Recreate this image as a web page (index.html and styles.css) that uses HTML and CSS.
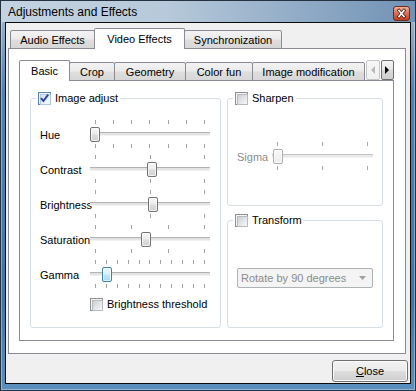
FILE: index.html
```html
<!DOCTYPE html>
<html>
<head>
<meta charset="utf-8">
<link rel="stylesheet" href="styles.css">
</head>
<body>
<div class="window">
  <div class="titlebar">
    <span class="title">Adjustments and Effects</span>
    <span class="tb-close">
      <svg width="17" height="15" viewBox="0 0 17 15">
        <defs>
          <linearGradient id="rg" x1="0" y1="0" x2="0" y2="1">
            <stop offset="0" stop-color="#f1b8a4"/>
            <stop offset="0.45" stop-color="#dc7358"/>
            <stop offset="1" stop-color="#c0391d"/>
          </linearGradient>
        </defs>
        <rect x="0.5" y="0.5" width="16" height="14" rx="2.5" fill="url(#rg)" stroke="#6e2c1f"/>
        <path d="M6 4.5 L11 10.5 M11 4.5 L6 10.5" stroke="#4a1a10" stroke-width="3.2" stroke-linecap="square"/>
        <path d="M6 4.5 L11 10.5 M11 4.5 L6 10.5" stroke="#ffffff" stroke-width="1.6" stroke-linecap="square"/>
      </svg>
    </span>
  </div>
  <div class="client">
    <div class="tabwidget outer">
      <div class="tabbar">
        <div class="tab w-audio">Audio Effects</div>
        <div class="tab sel w-video">Video Effects</div>
        <div class="tab w-sync">Synchronization</div>
      </div>
      <div class="pane outer-pane">
        <div class="tabwidget inner">
          <div class="tabbar inner-bar">
            <div class="tabs-clip">
              <div class="tab sel w-basic">Basic</div>
              <div class="tab w-crop">Crop</div>
              <div class="tab w-geom">Geometry</div>
              <div class="tab w-color">Color fun</div>
              <div class="tab w-image">Image modification</div>
            </div>
            <div class="scroll-btn off">
              <svg width="5" height="8" viewBox="0 0 5 8"><path d="M5 0 L1 4 L5 8 Z" fill="#b9b9b9"/></svg>
            </div>
            <div class="scroll-btn">
              <svg width="5" height="8" viewBox="0 0 5 8"><path d="M0 0 L4 4 L0 8 Z" fill="#000"/></svg>
            </div>
          </div>
          <div class="pane inner-pane">
            <fieldset class="group g-adjust">
              <legend class="gtitle">
                <span class="cb checked">
                  <svg class="check" width="13" height="13" viewBox="0 0 13 13"><path d="M3 6.2 L5.4 9 L10.2 2.6" fill="none" stroke="#2b47a0" stroke-width="2"/></svg>
                </span>
                <span>Image adjust</span>
              </legend>
              <div class="sliders">
                <span class="lbl">Hue</span>
                <div class="slider">
                  <div class="ticks"><i></i><i></i><i></i><i></i><i></i><i></i><i></i></div>
                  <div class="trackarea"><div class="groove"></div><div class="handle" style="left:0px"></div></div>
                  <div class="ticks"><i></i><i></i><i></i><i></i><i></i><i></i><i></i></div>
                </div>
                <span class="lbl">Contrast</span>
                <div class="slider">
                  <div class="ticks"><i></i><i></i><i></i></div>
                  <div class="trackarea"><div class="groove"></div><div class="handle" style="left:57px"></div></div>
                  <div class="ticks"><i></i><i></i><i></i></div>
                </div>
                <span class="lbl">Brightness</span>
                <div class="slider">
                  <div class="ticks"><i></i><i></i><i></i></div>
                  <div class="trackarea"><div class="groove"></div><div class="handle" style="left:58px"></div></div>
                  <div class="ticks"><i></i><i></i><i></i></div>
                </div>
                <span class="lbl">Saturation</span>
                <div class="slider">
                  <div class="ticks"><i></i><i></i><i></i><i></i></div>
                  <div class="trackarea"><div class="groove"></div><div class="handle" style="left:51px"></div></div>
                  <div class="ticks"><i></i><i></i><i></i><i></i></div>
                </div>
                <span class="lbl">Gamma</span>
                <div class="slider">
                  <div class="ticks"><i></i><i></i><i></i><i></i><i></i><i></i><i></i><i></i><i></i><i></i><i></i></div>
                  <div class="trackarea"><div class="groove"></div><div class="handle hot" style="left:12px"></div></div>
                  <div class="ticks"><i></i><i></i><i></i><i></i><i></i><i></i><i></i><i></i><i></i><i></i><i></i></div>
                </div>
              </div>
              <div class="chk-row">
                <span class="cb"></span>
                <span>Brightness threshold</span>
              </div>
            </fieldset>
            <div class="rightcol">
              <fieldset class="group">
                <legend class="gtitle">
                  <span class="cb"></span>
                  <span>Sharpen</span>
                </legend>
                <div class="sigma-row">
                  <span class="lbl dis">Sigma</span>
                  <div class="slider dis">
                    <div class="ticks"><i></i><i></i><i></i></div>
                    <div class="trackarea"><div class="groove"></div><div class="handle" style="left:1px"></div></div>
                    <div class="ticks"><i></i><i></i><i></i></div>
                  </div>
                </div>
              </fieldset>
              <fieldset class="group">
                <legend class="gtitle">
                  <span class="cb"></span>
                  <span>Transform</span>
                </legend>
                <div class="combo">
                  <span>Rotate by 90 degrees</span>
                  <svg width="7" height="4" viewBox="0 0 7 4"><path d="M0 0 L7 0 L3.5 4 Z" fill="#a0a0a0"/></svg>
                </div>
              </fieldset>
            </div>
          </div>
        </div>
      </div>
    </div>
    <div class="btnrow">
      <div class="btn"><span><u>C</u>lose</span></div>
    </div>
  </div>
</div>
</body>
</html>
```

FILE: styles.css
```css
* { box-sizing: border-box; }
html, body { margin: 0; padding: 0; }
body {
  width: 416px;
  height: 391px;
  overflow: hidden;
  font-family: "Liberation Sans", Arial, sans-serif;
  font-size: 11px;
  color: #000;
}

.window {
  width: 416px;
  height: 391px;
  border: 1px solid #26323f;
  background: linear-gradient(180deg, #b9cadb 0px, #8eaac6 30px, #4f82b4 90px, #3d75ab 300px, #5b8fbd 100%);
  box-shadow: inset 0 0 0 1px rgba(255,255,255,0.35);
  display: flex;
  flex-direction: column;
  padding: 0 4px 6px 4px;
}

.titlebar {
  margin: 0 -4px;
  height: 21px;
  flex: none;
  display: flex;
  align-items: flex-start;
  justify-content: space-between;
  background: linear-gradient(90deg, #c4d3e1 0%, #b7c9da 40%, #8ea9c5 75%, #7192b4 100%);
  padding: 0 5px 0 7px;
}
.title {
  font-size: 12px;
  line-height: 14px;
  margin-top: 4px;
  color: #000;
}
.tb-close {
  display: flex;
  margin-top: 5px;
}

.client {
  flex: 1;
  border: 1px solid #0c0c0c;
  background: #f0f0f0;
  display: flex;
  flex-direction: column;
  padding: 5px 2px 1px 2px;
}

.tabwidget {
  display: flex;
  flex-direction: column;
}
.tabwidget.outer {
  flex: 1;
  margin-right: 2px;
}
.tabwidget.inner {
  flex: 1;
}

.tabbar {
  display: flex;
  align-items: flex-end;
  height: 21px;
  flex: none;
  margin-bottom: -1px;
  padding-left: 2px;
  position: relative;
  z-index: 1;
}
.inner-bar { padding-left: 0; }

.tabs-clip {
  display: flex;
  align-items: flex-end;
  width: 346px;
  height: 21px;
  overflow: hidden;
  flex: none;
}

.tab {
  height: 19px;
  flex: none;
  border: 1px solid #898c95;
  border-radius: 2px 2px 0 0;
  background: linear-gradient(180deg, #f3f3f3 0%, #ebebeb 45%, #dedede 55%, #d7d7d7 100%);
  display: flex;
  align-items: center;
  justify-content: center;
  margin-right: -1px;
  white-space: nowrap;
  padding-top: 1px;
}
.tab.sel {
  height: 21px;
  background: #ffffff;
  border-bottom: none;
  position: relative;
  z-index: 2;
  padding-top: 0;
}

.w-audio { width: 85px; }
.w-video { width: 91px; }
.w-sync { width: 98px; }
.w-basic { width: 51px; }
.w-crop { width: 46px; }
.w-geom { width: 72px; }
.w-color { width: 68px; }
.w-image { width: 113px; }

.scroll-btn {
  width: 14px;
  height: 20px;
  align-self: flex-start;
  border: 1px solid #707070;
  border-radius: 2px;
  background: linear-gradient(180deg, #f4f4f4, #e6e6e6 50%, #d9d9d9 51%, #cfcfcf);
  display: flex;
  align-items: center;
  justify-content: center;
  margin-left: 1px;
}
.scroll-btn.off {
  border-color: #c6c6c6;
  background: linear-gradient(180deg, #f7f7f7, #f0f0f0);
}

.pane {
  border: 1px solid #898c95;
  background: #ffffff;
  flex: 1;
}
.outer-pane {
  display: flex;
  flex-direction: column;
  padding: 11px 11px 12px 10px;
}
.inner-pane {
  display: flex;
  gap: 6px;
  padding: 10px 10px 12px 10px;
}

.group {
  margin: 0;
  min-width: 0;
  border: 1px solid #d5dfe5;
  border-radius: 3px;
  padding: 15px 9px 0 9px;
}
.g-adjust {
  width: 191px;
  flex: none;
  padding-right: 10px;
}
.rightcol {
  width: 156px;
  flex: none;
  display: flex;
  flex-direction: column;
  gap: 7px;
}
.rightcol .group {
  flex: 1;
  padding-top: 0;
}

.gtitle {
  display: flex;
  align-items: center;
  gap: 4px;
  height: 14px;
  line-height: 14px;
  padding: 0 2px;
  margin-left: -4px;
}

.cb {
  width: 13px;
  height: 13px;
  flex: none;
  border: 1px solid #8e8f8f;
  background: #f4f4f4;
  padding: 1px;
  position: relative;
  display: block;
}
.cb::before {
  content: "";
  display: block;
  width: 9px;
  height: 9px;
  border: 1px solid #b7babe;
  background: linear-gradient(135deg, #cbcfd5 0%, #e4e6e9 55%, #f7f7f7 100%);
}
.cb.checked {
  border-color: #5a84b0;
}
.cb.checked::before {
  border-color: #b3c8dd;
  background: linear-gradient(135deg, #d7e4f1 0%, #eaf1f8 60%, #f8fbfd 100%);
}
.check {
  position: absolute;
  left: -1px;
  top: -1px;
}

.sliders {
  display: grid;
  grid-template-columns: 50px 120px;
  row-gap: 7px;
}
.lbl {
  align-self: center;
  white-space: nowrap;
  line-height: 14px;
  padding-top: 2px;
}
.lbl.dis { color: #8d8d8d; }

.slider {
  height: 28px;
  display: flex;
  flex-direction: column;
}
.ticks {
  height: 4px;
  display: flex;
  justify-content: space-between;
  padding: 0 5px;
}
.ticks i {
  display: block;
  width: 1px;
  height: 4px;
  background: #a3a3a3;
}
.trackarea {
  height: 20px;
  position: relative;
}
.groove {
  margin-top: 8px;
  height: 4px;
  border-top: 1px solid #b2b2b2;
  border-bottom: 1px solid #f2f2f2;
  background: #e3e3e3;
}
.handle {
  position: absolute;
  top: 3px;
  width: 10px;
  height: 15px;
  border: 1px solid #737373;
  border-radius: 2px;
  background: linear-gradient(180deg, #f7f7f7 0%, #ececec 45%, #dcdcdc 55%, #d2d2d2 100%);
  box-shadow: inset 0 0 0 1px rgba(255,255,255,0.7);
}
.handle.hot {
  border-color: #3c7fb1;
  background: linear-gradient(180deg, #eaf6fd 0%, #d9f0fc 45%, #bee6fd 55%, #a7d9f5 100%);
}
.slider.dis .handle {
  border-color: #a9adb1;
  background: linear-gradient(180deg, #f8f8f8, #ececec);
}
.slider.dis .groove {
  border-top-color: #c3c3c3;
  background: #eaeaea;
}
.slider.dis .ticks i { background: #a8a8a8; }

.chk-row {
  display: flex;
  align-items: center;
  gap: 4px;
  height: 14px;
  line-height: 14px;
  margin: 9px 0 0 50px;
}

.sigma-row {
  display: grid;
  grid-template-columns: 35px 101px;
  margin-top: 37px;
}

.combo {
  margin-top: 41px;
  width: 136px;
  height: 20px;
  border: 1px solid #adb2b5;
  border-radius: 2px;
  background: #f4f4f4;
  color: #8b8b8b;
  display: flex;
  align-items: center;
  justify-content: space-between;
  padding: 0 6px 0 3px;
  white-space: nowrap;
}

.btnrow {
  display: flex;
  justify-content: flex-end;
  margin-top: 6px;
  flex: none;
}
.btn {
  width: 76px;
  height: 22px;
  border: 1px solid #707070;
  border-radius: 3px;
  background: linear-gradient(180deg, #f2f2f2 0%, #ebebeb 48%, #dddddd 52%, #cfcfcf 100%);
  box-shadow: inset 0 0 0 1px #fbfbfb;
  display: flex;
  align-items: center;
  justify-content: center;
}
.btn u { text-decoration: underline; text-underline-offset: 1px; }
```
